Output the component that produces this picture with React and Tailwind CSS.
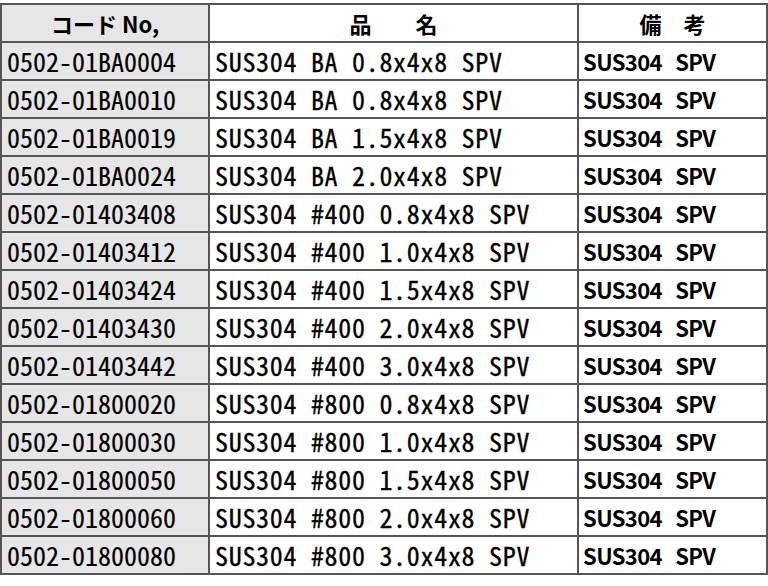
import React from "react";

const rows = [
  ["0502-01BA0004", "SUS304 BA 0.8x4x8 SPV"],
  ["0502-01BA0010", "SUS304 BA 0.8x4x8 SPV"],
  ["0502-01BA0019", "SUS304 BA 1.5x4x8 SPV"],
  ["0502-01BA0024", "SUS304 BA 2.0x4x8 SPV"],
  ["0502-01403408", "SUS304 #400 0.8x4x8 SPV"],
  ["0502-01403412", "SUS304 #400 1.0x4x8 SPV"],
  ["0502-01403424", "SUS304 #400 1.5x4x8 SPV"],
  ["0502-01403430", "SUS304 #400 2.0x4x8 SPV"],
  ["0502-01403442", "SUS304 #400 3.0x4x8 SPV"],
  ["0502-01800020", "SUS304 #800 0.8x4x8 SPV"],
  ["0502-01800030", "SUS304 #800 1.0x4x8 SPV"],
  ["0502-01800050", "SUS304 #800 1.5x4x8 SPV"],
  ["0502-01800060", "SUS304 #800 2.0x4x8 SPV"],
  ["0502-01800080", "SUS304 #800 3.0x4x8 SPV"],
];

export default function App() {
  return (
    <div className="w-[768px] h-[586px] bg-white pt-[3px] font-['Noto_Sans_CJK_JP','Noto_Sans',sans-serif]">
      <table className="border-collapse border-2 border-[#555] w-[766px] table-fixed text-black">
        <colgroup>
          <col className="w-[208px]" />
          <col className="w-[369px]" />
          <col className="w-[189px]" />
        </colgroup>
        <thead>
          <tr className="h-[38px]">
            <th className="border-2 border-[#555] bg-[#e6e6e6] text-[22px] font-bold leading-none text-center">
              コード No,
            </th>
            <th className="border-2 border-[#555] text-[22px] font-bold leading-none text-center">
              品　　名
            </th>
            <th className="border-2 border-[#555] text-[22px] font-bold leading-none text-center">
              備　考
            </th>
          </tr>
        </thead>
        <tbody>
          {rows.map(([code, name], i) => (
            <tr key={i} className="h-[38px]">
              <td className="border-2 border-[#555] bg-[#e6e6e6] pl-[5px] text-[26px] leading-none whitespace-nowrap [font-feature-settings:'hwid'] [-webkit-text-stroke:0.15px_black]">
                {code}
              </td>
              <td className="border-2 border-[#555] pl-[5px] text-[26px] font-normal leading-none tracking-[0.7px] whitespace-nowrap [font-feature-settings:'hwid'] [-webkit-text-stroke:0.3px_black]">
                {name}
              </td>
              <td className="border-2 border-[#555] pl-[4px] text-[22px] font-bold leading-none tracking-[-0.6px] whitespace-nowrap">
                SUS304&nbsp;&nbsp;&nbsp;SPV
              </td>
            </tr>
          ))}
        </tbody>
      </table>
    </div>
  );
}
